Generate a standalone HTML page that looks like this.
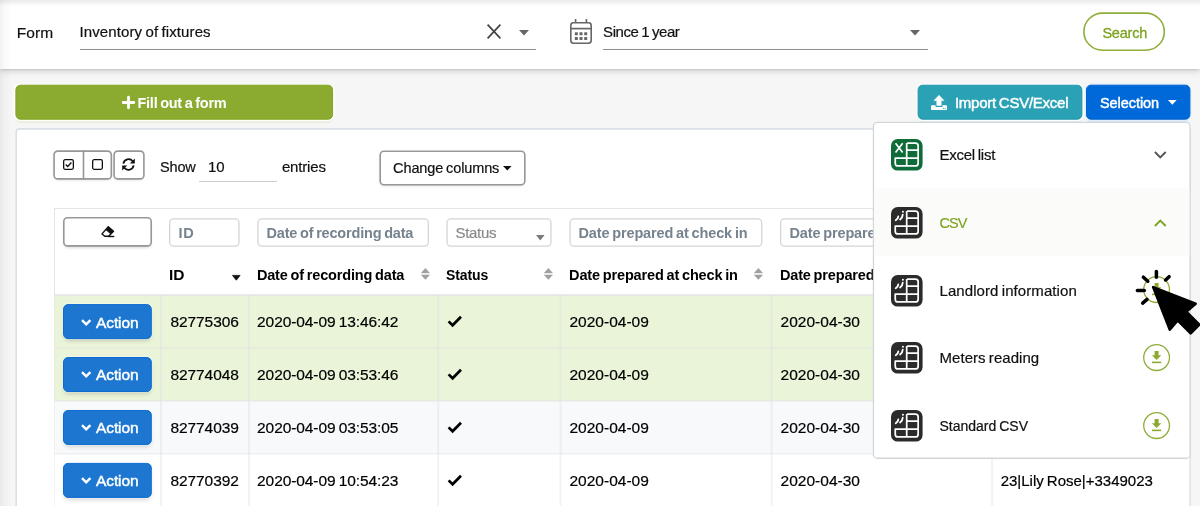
<!DOCTYPE html>
<html lang="en">
<head>
<meta charset="utf-8">
<title>Inventory of fixtures</title>
<style>
*{box-sizing:border-box;margin:0;padding:0}
html,body{width:1200px;height:506px;overflow:hidden;background:#f6f6f6}
body{font-family:"Liberation Sans",sans-serif;font-size:15px;color:#111;position:relative}
.t{position:absolute;white-space:nowrap;line-height:20px}
#wrap{position:absolute;left:0;top:0;width:1200px;height:506px;overflow:hidden;will-change:transform}
#topbar{position:absolute;left:0;top:0;width:1200px;height:68.5px;background:#fff;box-shadow:0 1px 2px rgba(0,0,0,.12),0 3px 6px rgba(0,0,0,.12)}
#topgrad{position:absolute;left:0;top:0;width:1200px;height:6px;background:linear-gradient(#e9e9e9,rgba(255,255,255,0))}
#leftgrad{position:absolute;left:0;top:0;width:12px;height:506px;background:linear-gradient(90deg,rgba(0,0,0,.055),rgba(0,0,0,.02) 40%,rgba(0,0,0,0))}
.uline{position:absolute;height:1.4px;background:#909090}
#tbl{position:absolute;left:53.600px;top:207.600px;width:1135.600px;height:300px;border-top:1.3px solid #e6e6e6;border-left:1.3px solid #e6e6e6}
svg{position:absolute;overflow:visible}
</style>
</head>
<body>
<div id="wrap">
<div id="topbar"><div id="topgrad"></div></div>
<span class="t" style="left:16.7px;top:22.6px;font-size:15.5px;color:#111;letter-spacing:0.13px;word-spacing:-1.0px;-webkit-text-stroke:0.2px #111">Form</span>
<span class="t" style="left:79.5px;top:22.2px;font-size:15px;color:#111;letter-spacing:0.11px;word-spacing:-1.0px;-webkit-text-stroke:0.2px #111">Inventory of fixtures</span>
<div class="uline" style="left:80px;top:48.500px;width:456px"></div>
<svg style="left:487.2px;top:24.4px" width="14" height="15" viewBox="0 0 14 15"><path d="M0.6 0.6L13.4 14.4M13.4 0.6L0.6 14.4" stroke="#444" stroke-width="1.7" fill="none"/></svg>
<svg style="left:518.6px;top:29.8px" width="10" height="5.5" viewBox="0 0 10 5.5"><path d="M0 0H10L5.0 5.5Z" fill="#666"/></svg>
<svg style="left:570px;top:19px" width="22" height="25" viewBox="0 0 22 25"><rect x="0.8" y="3.8" width="20.4" height="20.4" rx="2.6" fill="none" stroke="#666" stroke-width="1.6"/>
<path d="M1 9.6H21" stroke="#666" stroke-width="1.7"/><path d="M5.600 0V4M16.400 0V4" stroke="#666" stroke-width="1.600"/>
<g fill="#666"><rect x="4.800" y="13.300" width="3" height="3" rx=".5"/><rect x="9.500" y="13.300" width="3" height="3" rx=".5"/><rect x="14.200" y="13.300" width="3" height="3" rx=".5"/><rect x="4.800" y="17.900" width="3" height="3" rx=".5"/><rect x="9.500" y="17.900" width="3" height="3" rx=".5"/><rect x="14.200" y="17.900" width="3" height="3" rx=".5"/></g></svg>
<span class="t" style="left:603.1px;top:22.2px;font-size:15px;color:#111;letter-spacing:-0.42px;word-spacing:-1.0px;-webkit-text-stroke:0.2px #111">Since 1 year</span>
<div class="uline" style="left:603px;top:48.500px;width:325px"></div>
<svg style="left:910.4px;top:29.8px" width="10" height="5.5" viewBox="0 0 10 5.5"><path d="M0 0H10L5.0 5.5Z" fill="#666"/></svg>
<svg style="left:1080px;top:9px" width="89" height="45" viewBox="1080 9 89 45"><rect x="1083.9" y="13.1" width="80.4" height="37.1" rx="18.599999999999998" fill="#fff" stroke="#8fae3a" stroke-width="1.6"/></svg>
<span class="t" style="left:1102.4px;top:23.2px;font-size:14.5px;color:#7da220;letter-spacing:-0.2px;word-spacing:-1.0px;-webkit-text-stroke:0.3px #7da220">Search</span>

<div style="position:absolute;left:16px;top:86px;width:316px;height:33px;border-radius:5px;box-shadow:0 0 0 2.500px rgba(255,255,255,.95),0 3px 2px rgba(138,171,48,.35)"></div><svg style="left:12px;top:81px" width="325" height="42" viewBox="12 81 325 42"><rect x="15.9" y="85.2" width="316.7" height="34.0" rx="4.5" fill="#8aab30" stroke="#81a520" stroke-width="1"/></svg>
<svg style="left:121.6px;top:96px" width="13" height="13" viewBox="0 0 13 13"><path d="M6.500 1.200V11.800M1.200 6.500H11.800" stroke="#fff" stroke-width="2.800" stroke-linecap="round"/></svg>
<span class="t" style="left:137.5px;top:93.0px;font-size:14.5px;color:#fff;letter-spacing:-0.26px;word-spacing:-1.0px;font-weight:bold">Fill out a form</span>
<div style="position:absolute;left:919px;top:86px;width:163px;height:33px;border-radius:5px;box-shadow:0 0 0 2.500px rgba(255,255,255,.95),0 3px 2px rgba(42,161,181,.3)"></div><svg style="left:914px;top:81px" width="172" height="42" viewBox="914 81 172 42"><rect x="918.1" y="85.2" width="163.8" height="34.0" rx="4.5" fill="#2aa1b5" stroke="#2297ab" stroke-width="1"/></svg>
<svg style="left:930.6px;top:95px" width="16" height="15" viewBox="0 0 16 15"><path d="M8 0.300L13 5.600H10.200V10.400H5.800V5.600H3Z" fill="#fff" stroke="#fff" stroke-width=".6" stroke-linejoin="round"/><path d="M0.800 10.300H4.600V12H11.400V10.300H15.200Q16 10.300 16 11.100V14.200Q16 15 15.200 15H0.800Q0 15 0 14.200V11.100Q0 10.300 0.800 10.300Z" fill="#fff"/><circle cx="12.300" cy="13.300" r=".6" fill="#2aa1b5"/><circle cx="14.100" cy="13.300" r=".6" fill="#2aa1b5"/></svg>
<span class="t" style="left:954.9px;top:93.0px;font-size:15px;color:#fff;letter-spacing:-0.25px;word-spacing:-1.0px;-webkit-text-stroke:0.45px #fff">Import CSV/Excel</span>
<div style="position:absolute;left:1087px;top:86px;width:102px;height:33px;border-radius:5px;box-shadow:0 0 0 2.500px rgba(225,238,252,.95),0 3px 2px rgba(0,105,217,.25)"></div><svg style="left:1083px;top:81px" width="111" height="42" viewBox="1083 81 111 42"><rect x="1086.5" y="85.2" width="103.4" height="34.0" rx="4.5" fill="#0069d9" stroke="#0062cc" stroke-width="1"/></svg>
<span class="t" style="left:1099.9px;top:93.0px;font-size:14.5px;color:#fff;letter-spacing:-0.05px;word-spacing:-1.0px;-webkit-text-stroke:0.45px #fff">Selection</span>
<svg style="left:1168.4px;top:99.6px" width="8.6" height="4.8" viewBox="0 0 8.6 4.8"><path d="M0 0H8.6L4.3 4.8Z" fill="#fff"/></svg>

<svg style="left:12px;top:125px" width="1182" height="398" viewBox="12 125 1182 398"><rect x="16.2" y="128.9" width="1173.8" height="390.3" rx="3.2" fill="#fff" stroke="#dae0e5" stroke-width="1.6"/></svg>
<div style="position:absolute;left:54px;top:151px;width:57px;height:27px;border-radius:4.5px;box-shadow:0 2px 3px rgba(0,0,0,.15)"></div><svg style="left:50px;top:147px" width="66" height="36" viewBox="50 147 66 36"><rect x="54.1" y="151.1" width="57.2" height="27.8" rx="3.7" fill="#fff" stroke="#979797" stroke-width="1.6"/><path d="M83.500 150.300V179.700" stroke="#979797" stroke-width="1.600"/></svg>
<div style="position:absolute;left:114px;top:151px;width:29px;height:27px;border-radius:4.5px;box-shadow:0 2px 3px rgba(0,0,0,.15)"></div><svg style="left:110px;top:147px" width="38" height="36" viewBox="110 147 38 36"><rect x="114.1" y="151.1" width="29.8" height="27.8" rx="3.7" fill="#fff" stroke="#979797" stroke-width="1.6"/></svg>
<svg style="left:63px;top:159px" width="11" height="11" viewBox="0 0 11 11"><rect x="0.650" y="0.650" width="9.700" height="9.700" rx="1.500" fill="none" stroke="#111" stroke-width="1.300"/><path d="M2.700 5.500L4.700 7.500L8.400 3.500" fill="none" stroke="#111" stroke-width="1.400"/></svg><svg style="left:92px;top:159px" width="11" height="11" viewBox="0 0 11 11"><rect x="0.650" y="0.650" width="9.700" height="9.700" rx="1.500" fill="none" stroke="#111" stroke-width="1.300"/></svg><svg style="left:122px;top:158px" width="13" height="13" viewBox="0 0 13 13"><path d="M1.400 5.700A5.200 5.200 0 0 1 10.700 3.300" fill="none" stroke="#111" stroke-width="1.800"/><path d="M12.800 0.400V5.400H7.800Z" fill="#111"/><path d="M11.600 7.300A5.200 5.200 0 0 1 2.300 9.700" fill="none" stroke="#111" stroke-width="1.800"/><path d="M0.200 12.600V7.600H5.200Z" fill="#111"/></svg>
<span class="t" style="left:160.1px;top:157.2px;font-size:14.5px;color:#111;letter-spacing:-0.2px;word-spacing:-1.0px;-webkit-text-stroke:0.2px #111">Show</span>
<span class="t" style="left:207.9px;top:157.4px;font-size:15px;color:#111;letter-spacing:0.0px;word-spacing:-1.0px;-webkit-text-stroke:0.2px #111">10</span>
<div class="uline" style="left:199.400px;top:180.800px;width:77.600px;background:#cfcfcf;height:1.200px"></div>
<span class="t" style="left:281.9px;top:157.2px;font-size:15px;color:#111;letter-spacing:-0.17px;word-spacing:-1.0px;-webkit-text-stroke:0.2px #111">entries</span>
<div style="position:absolute;left:380px;top:151px;width:144px;height:33px;border-radius:4.5px;box-shadow:0 2px 3px rgba(0,0,0,.15)"></div><svg style="left:376px;top:147px" width="153" height="42" viewBox="376 147 153 42"><rect x="380.2" y="151.2" width="144.6" height="33.6" rx="3.7" fill="#fff" stroke="#979797" stroke-width="1.6"/></svg>
<span class="t" style="left:393.1px;top:158.0px;font-size:14.5px;color:#111;letter-spacing:-0.12px;word-spacing:-1.0px;-webkit-text-stroke:0.2px #111">Change columns</span>
<svg style="left:503px;top:165.6px" width="8.6" height="4.6" viewBox="0 0 8.6 4.6"><path d="M0 0H8.6L4.3 4.6Z" fill="#111"/></svg>

<div id="tbl"></div>
<div style="position:absolute;left:64px;top:218px;width:87px;height:28px;border-radius:4.5px;box-shadow:0 2px 3px rgba(0,0,0,.15)"></div><svg style="left:60px;top:214px" width="95" height="36" viewBox="60 214 95 36"><rect x="63.8" y="217.8" width="87.4" height="28.1" rx="3.7" fill="#fff" stroke="#979797" stroke-width="1.6"/></svg>
<svg style="left:101px;top:226px" width="13.5" height="11.5" viewBox="0 0 13.5 11.5"><path d="M7.300 0.800L12.500 5.300L7.700 10.300H3.700L1 7.900Z" fill="#fff" stroke="#111" stroke-width="1.400" stroke-linejoin="round"/><path d="M7.300 0.800L12.500 5.300L9.800 8.100L4.600 3.600Z" fill="#111" stroke="#111" stroke-width=".6" stroke-linejoin="round"/><path d="M7 10.500H13.300" stroke="#111" stroke-width="1.400"/></svg>
<svg style="left:166px;top:215px" width="77" height="35" viewBox="166 215 77 35"><rect x="169.65" y="218.95" width="69.3" height="27.1" rx="3.85" fill="#fff" stroke="#d4d5d6" stroke-width="1.3"/></svg><span class="t" style="left:178.5px;top:223.0px;font-size:14.5px;color:#76838f;letter-spacing:0.6px;word-spacing:-1.0px;font-weight:bold">ID</span>
<svg style="left:254px;top:215px" width="178" height="35" viewBox="254 215 178 35"><rect x="257.95" y="218.95" width="170.4" height="27.1" rx="3.85" fill="#fff" stroke="#d4d5d6" stroke-width="1.3"/></svg><span class="t" style="left:266.5px;top:223.0px;font-size:14.5px;color:#76838f;letter-spacing:-0.19px;word-spacing:-1.0px;font-weight:bold">Date of recording data</span>
<svg style="left:443px;top:215px" width="112" height="35" viewBox="443 215 112 35"><rect x="447.05" y="218.95" width="103.9" height="27.1" rx="3.85" fill="#fff" stroke="#d4d5d6" stroke-width="1.3"/></svg><span class="t" style="left:455.5px;top:223.0px;font-size:15px;color:#8a8a8a;letter-spacing:-0.32px;word-spacing:-1.0px;-webkit-text-stroke:0.2px #8a8a8a">Status</span>
<svg style="left:536px;top:235px" width="8.6" height="5.4" viewBox="0 0 8.6 5.4"><path d="M0 0H8.6L4.3 5.4Z" fill="#7a7a7a"/></svg>
<svg style="left:566px;top:215px" width="200" height="35" viewBox="566 215 200 35"><rect x="570.05" y="218.95" width="191.7" height="27.1" rx="3.85" fill="#fff" stroke="#d4d5d6" stroke-width="1.3"/></svg><span class="t" style="left:578.5px;top:223.0px;font-size:14.5px;color:#76838f;letter-spacing:-0.14px;word-spacing:-1.0px;font-weight:bold">Date prepared at check in</span>
<svg style="left:777px;top:215px" width="209" height="35" viewBox="777 215 209 35"><rect x="780.65" y="218.95" width="201.7" height="27.1" rx="3.85" fill="#fff" stroke="#d4d5d6" stroke-width="1.3"/></svg><span class="t" style="left:789.5px;top:223.0px;font-size:14.5px;color:#76838f;letter-spacing:-0.14px;word-spacing:-1.0px;font-weight:bold">Date prepared at check out</span>

<span class="t" style="left:168.9px;top:265.4px;font-size:15.5px;color:#000;letter-spacing:0.0px;word-spacing:-1.0px;font-weight:bold">ID</span><svg style="left:232px;top:275px" width="8.6" height="5.6" viewBox="0 0 8.6 5.6"><path d="M0.500 0.400H8.100L4.300 5.200Z" fill="#111" stroke="#111" stroke-width=".8" stroke-linejoin="round"/></svg>
<span class="t" style="left:256.9px;top:265.4px;font-size:14.5px;color:#000;letter-spacing:-0.16px;word-spacing:-1.0px;font-weight:bold">Date of recording data</span><svg style="left:421.20000000000005px;top:268.1px" width="8.8" height="11.8" viewBox="0 0 8.8 11.8"><path d="M4.400 0.300L8.500 4.900H0.300Z M0.300 6.900H8.500L4.400 11.500Z" fill="#a0a0a0" stroke="#a0a0a0" stroke-width=".5" stroke-linejoin="round"/></svg>
<span class="t" style="left:446.1px;top:265.4px;font-size:14.0px;color:#000;letter-spacing:-0.12px;word-spacing:-1.0px;font-weight:bold">Status</span><svg style="left:543.8000000000001px;top:268.1px" width="8.8" height="11.8" viewBox="0 0 8.8 11.8"><path d="M4.400 0.300L8.500 4.900H0.300Z M0.300 6.900H8.500L4.400 11.500Z" fill="#a0a0a0" stroke="#a0a0a0" stroke-width=".5" stroke-linejoin="round"/></svg>
<span class="t" style="left:569.1px;top:265.4px;font-size:14.5px;color:#000;letter-spacing:-0.15px;word-spacing:-1.0px;font-weight:bold">Date prepared at check in</span><svg style="left:754.2px;top:268.1px" width="8.8" height="11.8" viewBox="0 0 8.8 11.8"><path d="M4.400 0.300L8.500 4.900H0.300Z M0.300 6.900H8.500L4.400 11.500Z" fill="#a0a0a0" stroke="#a0a0a0" stroke-width=".5" stroke-linejoin="round"/></svg>
<span class="t" style="left:779.9px;top:265.4px;font-size:14.5px;color:#000;letter-spacing:-0.15px;word-spacing:-1.0px;font-weight:bold">Date prepared at check out</span><svg style="left:969.6px;top:268.1px" width="8.8" height="11.8" viewBox="0 0 8.8 11.8"><path d="M4.400 0.300L8.500 4.900H0.300Z M0.300 6.900H8.500L4.400 11.500Z" fill="#a0a0a0" stroke="#a0a0a0" stroke-width=".5" stroke-linejoin="round"/></svg>

<svg style="left:50px;top:290px" width="1150" height="216" viewBox="50 290 1150 216"><rect x="54.500" y="295.05" width="1134.800" height="53.40" fill="#eaf4d8"/><rect x="54.500" y="347.95" width="1134.800" height="53.40" fill="#eaf4d8"/><rect x="54.500" y="400.85" width="1134.800" height="53.40" fill="#f8f9fb"/><rect x="54.500" y="453.75" width="1134.800" height="53.40" fill="#ffffff"/><path d="M54.500 295.05H1189.300" stroke="#dde1e5" stroke-opacity=".85" stroke-width="1.600"/><path d="M54.500 347.95H1189.300" stroke="#dde1e5" stroke-opacity=".45" stroke-width="1.600"/><path d="M54.500 400.85H1189.300" stroke="#dde1e5" stroke-opacity=".45" stroke-width="1.600"/><path d="M54.500 453.75H1189.300" stroke="#dde1e5" stroke-opacity=".45" stroke-width="1.600"/><path d="M161.0 294.35V506" stroke="#dde1e5" stroke-opacity=".42" stroke-width="2"/><path d="M249.0 294.35V506" stroke="#dde1e5" stroke-opacity=".42" stroke-width="2"/><path d="M438.2 294.35V506" stroke="#dde1e5" stroke-opacity=".42" stroke-width="2"/><path d="M560.6 294.35V506" stroke="#dde1e5" stroke-opacity=".42" stroke-width="2"/><path d="M771.7 294.35V506" stroke="#dde1e5" stroke-opacity=".42" stroke-width="2"/><path d="M992.2 294.35V506" stroke="#dde1e5" stroke-opacity=".42" stroke-width="2"/></svg>
<div style="position:absolute;left:64px;top:305px;width:87px;height:33px;border-radius:5px;box-shadow:0 0 0 2px rgba(255,255,255,.3),0 3px 4px rgba(0,0,0,.16)"></div><svg style="left:60px;top:301px" width="95" height="42" viewBox="60 301 95 42"><rect x="63.5" y="304.6" width="87.8" height="34.0" rx="4.5" fill="#1d77d1" stroke="#0c6bd2" stroke-width="1"/></svg><svg style="left:80.8px;top:318.5px" width="10.4" height="7.2" viewBox="0 0 10.4 7.2"><path d="M1 1.100L5.200 5.300L9.400 1.100" fill="none" stroke="#fff" stroke-width="2.400"/></svg><span class="t" style="left:96.0px;top:312.5px;font-size:15.5px;color:#fff;letter-spacing:-0.1px;word-spacing:-1.0px;-webkit-text-stroke:0.45px #fff">Action</span>
<span class="t" style="left:170.5px;top:312.1px;font-size:15.5px;color:#000;letter-spacing:-0.09px;word-spacing:-1.0px;-webkit-text-stroke:0.2px #000">82775306</span><span class="t" style="left:257.1px;top:312.1px;font-size:15.5px;color:#000;letter-spacing:-0.09px;word-spacing:-1.0px;-webkit-text-stroke:0.2px #000">2020-04-09 13:46:42</span><svg style="left:446.6px;top:315.4px" width="15.9" height="12.2" viewBox="0 0 15.9 12.2"><path d="M1.600 6.400L5.600 10.300L14 1.700" fill="none" stroke="#000" stroke-width="2.700"/></svg><span class="t" style="left:569.5px;top:312.1px;font-size:15.5px;color:#000;letter-spacing:0.0px;word-spacing:-1.0px;-webkit-text-stroke:0.2px #000">2020-04-09</span><span class="t" style="left:780.5px;top:312.1px;font-size:15.5px;color:#000;letter-spacing:0.02px;word-spacing:-1.0px;-webkit-text-stroke:0.2px #000">2020-04-30</span>
<div style="position:absolute;left:64px;top:358px;width:87px;height:33px;border-radius:5px;box-shadow:0 0 0 2px rgba(255,255,255,.3),0 3px 4px rgba(0,0,0,.16)"></div><svg style="left:60px;top:354px" width="95" height="42" viewBox="60 354 95 42"><rect x="63.5" y="357.53" width="87.8" height="34.0" rx="4.5" fill="#1d77d1" stroke="#0c6bd2" stroke-width="1"/></svg><svg style="left:80.8px;top:371.42999999999995px" width="10.4" height="7.2" viewBox="0 0 10.4 7.2"><path d="M1 1.100L5.200 5.300L9.400 1.100" fill="none" stroke="#fff" stroke-width="2.400"/></svg><span class="t" style="left:96.0px;top:365.4px;font-size:15.5px;color:#fff;letter-spacing:-0.1px;word-spacing:-1.0px;-webkit-text-stroke:0.45px #fff">Action</span>
<span class="t" style="left:170.5px;top:365.1px;font-size:15.5px;color:#000;letter-spacing:-0.09px;word-spacing:-1.0px;-webkit-text-stroke:0.2px #000">82774048</span><span class="t" style="left:257.1px;top:365.1px;font-size:15.5px;color:#000;letter-spacing:-0.09px;word-spacing:-1.0px;-webkit-text-stroke:0.2px #000">2020-04-09 03:53:46</span><svg style="left:446.6px;top:368.33px" width="15.9" height="12.2" viewBox="0 0 15.9 12.2"><path d="M1.600 6.400L5.600 10.300L14 1.700" fill="none" stroke="#000" stroke-width="2.700"/></svg><span class="t" style="left:569.5px;top:365.1px;font-size:15.5px;color:#000;letter-spacing:0.0px;word-spacing:-1.0px;-webkit-text-stroke:0.2px #000">2020-04-09</span><span class="t" style="left:780.5px;top:365.1px;font-size:15.5px;color:#000;letter-spacing:0.02px;word-spacing:-1.0px;-webkit-text-stroke:0.2px #000">2020-04-30</span>
<div style="position:absolute;left:64px;top:411px;width:87px;height:33px;border-radius:5px;box-shadow:0 0 0 2px rgba(255,255,255,.3),0 3px 4px rgba(0,0,0,.16)"></div><svg style="left:60px;top:406px" width="95" height="42" viewBox="60 406 95 42"><rect x="63.5" y="410.46" width="87.8" height="34.0" rx="4.5" fill="#1d77d1" stroke="#0c6bd2" stroke-width="1"/></svg><svg style="left:80.8px;top:424.35999999999996px" width="10.4" height="7.2" viewBox="0 0 10.4 7.2"><path d="M1 1.100L5.200 5.300L9.400 1.100" fill="none" stroke="#fff" stroke-width="2.400"/></svg><span class="t" style="left:96.0px;top:418.4px;font-size:15.5px;color:#fff;letter-spacing:-0.1px;word-spacing:-1.0px;-webkit-text-stroke:0.45px #fff">Action</span>
<span class="t" style="left:170.5px;top:418.0px;font-size:15.5px;color:#000;letter-spacing:-0.09px;word-spacing:-1.0px;-webkit-text-stroke:0.2px #000">82774039</span><span class="t" style="left:257.1px;top:418.0px;font-size:15.5px;color:#000;letter-spacing:-0.09px;word-spacing:-1.0px;-webkit-text-stroke:0.2px #000">2020-04-09 03:53:05</span><svg style="left:446.6px;top:421.26px" width="15.9" height="12.2" viewBox="0 0 15.9 12.2"><path d="M1.600 6.400L5.600 10.300L14 1.700" fill="none" stroke="#000" stroke-width="2.700"/></svg><span class="t" style="left:569.5px;top:418.0px;font-size:15.5px;color:#000;letter-spacing:0.0px;word-spacing:-1.0px;-webkit-text-stroke:0.2px #000">2020-04-09</span><span class="t" style="left:780.5px;top:418.0px;font-size:15.5px;color:#000;letter-spacing:0.02px;word-spacing:-1.0px;-webkit-text-stroke:0.2px #000">2020-04-30</span>
<div style="position:absolute;left:64px;top:464px;width:87px;height:33px;border-radius:5px;box-shadow:0 0 0 2px rgba(255,255,255,.3),0 3px 4px rgba(0,0,0,.16)"></div><svg style="left:60px;top:459px" width="95" height="42" viewBox="60 459 95 42"><rect x="63.5" y="463.39" width="87.8" height="34.0" rx="4.5" fill="#1d77d1" stroke="#0c6bd2" stroke-width="1"/></svg><svg style="left:80.8px;top:477.28999999999996px" width="10.4" height="7.2" viewBox="0 0 10.4 7.2"><path d="M1 1.100L5.200 5.300L9.400 1.100" fill="none" stroke="#fff" stroke-width="2.400"/></svg><span class="t" style="left:96.0px;top:471.4px;font-size:15.5px;color:#fff;letter-spacing:-0.1px;word-spacing:-1.0px;-webkit-text-stroke:0.45px #fff">Action</span>
<span class="t" style="left:170.5px;top:471.0px;font-size:15.5px;color:#000;letter-spacing:-0.09px;word-spacing:-1.0px;-webkit-text-stroke:0.2px #000">82770392</span><span class="t" style="left:257.1px;top:471.0px;font-size:15.5px;color:#000;letter-spacing:-0.09px;word-spacing:-1.0px;-webkit-text-stroke:0.2px #000">2020-04-09 10:54:23</span><svg style="left:446.6px;top:474.19px" width="15.9" height="12.2" viewBox="0 0 15.9 12.2"><path d="M1.600 6.400L5.600 10.300L14 1.700" fill="none" stroke="#000" stroke-width="2.700"/></svg><span class="t" style="left:569.5px;top:471.0px;font-size:15.5px;color:#000;letter-spacing:0.0px;word-spacing:-1.0px;-webkit-text-stroke:0.2px #000">2020-04-09</span><span class="t" style="left:780.5px;top:471.0px;font-size:15.5px;color:#000;letter-spacing:0.02px;word-spacing:-1.0px;-webkit-text-stroke:0.2px #000">2020-04-30</span>
<span class="t" style="left:1000.7px;top:471.0px;font-size:15px;color:#000;letter-spacing:-0.01px;word-spacing:-1.0px;-webkit-text-stroke:0.2px #000">23|Lily Rose|+3349023</span>
<div style="position:absolute;left:874px;top:123px;width:316px;height:335px;border-radius:4.5px;box-shadow:0 1px 2px rgba(0,0,0,.05)"></div><svg style="left:869px;top:118px" width="325" height="344" viewBox="869 118 325 344"><rect x="873.45" y="122.35" width="316.6" height="335.9" rx="3.85" fill="#fff" stroke="#d3d6d9" stroke-width="1.3"/><rect x="874" y="188.500" width="315.400" height="67.600" fill="#fbfbf9"/></svg>
<svg style="left:891px;top:138.95px" width="31.6" height="31.6" viewBox="0 0 32 32"><rect width="32" height="32" rx="6.800" fill="#0f6b38"/><path d="M16.300 4.100H24.700Q27.500 4.100 27.500 6.900V24.500Q27.500 27.300 24.700 27.300H7Q4.300 27.300 4.300 24.500V19.300H27.500M15.900 4.100V27.300M15.900 11.300H27.500" fill="none" stroke="#fff" stroke-width="1.750" stroke-linejoin="round"/><path d="M4.600 4.400L11.800 13.600M11.800 4.400L4.600 13.600" stroke="#fff" stroke-width="1.700" fill="none"/></svg><span class="t" style="left:939.5px;top:144.9px;font-size:15px;color:#111;letter-spacing:-0.26px;word-spacing:-1.0px;-webkit-text-stroke:0.2px #111">Excel list</span><svg style="left:1153.6px;top:151.2px" width="12.6" height="8" viewBox="0 0 12.6 8"><path d="M0.900 1L6.300 6.400L11.700 1" fill="none" stroke="#555" stroke-width="1.900"/></svg>
<svg style="left:891px;top:206.75px" width="31.6" height="31.6" viewBox="0 0 32 32"><rect width="32" height="32" rx="6.800" fill="#2b2b2b"/><path d="M16.300 4.100H24.700Q27.500 4.100 27.500 6.900V24.500Q27.500 27.300 24.700 27.300H7Q4.300 27.300 4.300 24.500V19.300H27.500M15.900 4.100V27.300M15.900 11.300H27.500" fill="none" stroke="#fff" stroke-width="1.750" stroke-linejoin="round"/><path d="M7.400 9.500Q7.200 11.900 4.800 13.500M11.900 7.700Q11.700 10.900 9.200 12.700" stroke="#fff" stroke-width="1.850" fill="none" stroke-linecap="round"/><circle cx="12.100" cy="4.900" r="1" fill="#fff"/></svg><span class="t" style="left:939.5px;top:212.5px;font-size:14.5px;color:#7da220;letter-spacing:-0.9px;word-spacing:-1.0px;-webkit-text-stroke:0.15px #7da220">CSV</span><svg style="left:1153.6px;top:219px" width="12.6" height="8" viewBox="0 0 12.6 8"><path d="M0.900 7L6.300 1.600L11.700 7" fill="none" stroke="#7da220" stroke-width="1.900"/></svg>
<svg style="left:891px;top:274.55px" width="31.6" height="31.6" viewBox="0 0 32 32"><rect width="32" height="32" rx="6.800" fill="#2b2b2b"/><path d="M16.300 4.100H24.700Q27.500 4.100 27.500 6.900V24.500Q27.500 27.300 24.700 27.300H7Q4.300 27.300 4.300 24.500V19.300H27.500M15.900 4.100V27.300M15.900 11.300H27.500" fill="none" stroke="#fff" stroke-width="1.750" stroke-linejoin="round"/><path d="M7.400 9.500Q7.200 11.900 4.800 13.500M11.900 7.700Q11.700 10.900 9.200 12.700" stroke="#fff" stroke-width="1.850" fill="none" stroke-linecap="round"/><circle cx="12.100" cy="4.900" r="1" fill="#fff"/></svg><span class="t" style="left:939.5px;top:280.6px;font-size:15px;color:#111;letter-spacing:0.08px;word-spacing:-1.0px;-webkit-text-stroke:0.2px #111">Landlord information</span><svg style="left:1143px;top:276.45000000000005px" width="27.2" height="27.2" viewBox="0 0 27.2 27.2"><circle cx="13.600" cy="13.600" r="12.900" fill="#fff" stroke="#8fae3a" stroke-width="1.300"/><path d="M11.600 7.100H15.600V11.200H18.300L13.600 15.900L8.900 11.200H11.600Z" fill="#8aab30"/><path d="M9 17.600H18.200V19.200H9Z" fill="#8aab30"/></svg>
<svg style="left:891px;top:342.34999999999997px" width="31.6" height="31.6" viewBox="0 0 32 32"><rect width="32" height="32" rx="6.800" fill="#2b2b2b"/><path d="M16.300 4.100H24.700Q27.500 4.100 27.500 6.900V24.500Q27.500 27.300 24.700 27.300H7Q4.300 27.300 4.300 24.500V19.300H27.500M15.900 4.100V27.300M15.900 11.300H27.500" fill="none" stroke="#fff" stroke-width="1.750" stroke-linejoin="round"/><path d="M7.400 9.500Q7.200 11.900 4.800 13.500M11.900 7.700Q11.700 10.900 9.200 12.700" stroke="#fff" stroke-width="1.850" fill="none" stroke-linecap="round"/><circle cx="12.100" cy="4.900" r="1" fill="#fff"/></svg><span class="t" style="left:939.5px;top:348.4px;font-size:15px;color:#111;letter-spacing:0.05px;word-spacing:-1.0px;-webkit-text-stroke:0.2px #111">Meters reading</span><svg style="left:1143px;top:344.25px" width="27.2" height="27.2" viewBox="0 0 27.2 27.2"><circle cx="13.600" cy="13.600" r="12.900" fill="#fff" stroke="#8fae3a" stroke-width="1.300"/><path d="M11.600 7.100H15.600V11.200H18.300L13.600 15.900L8.900 11.200H11.600Z" fill="#8aab30"/><path d="M9 17.600H18.200V19.200H9Z" fill="#8aab30"/></svg>
<svg style="left:891px;top:410.15px" width="31.6" height="31.6" viewBox="0 0 32 32"><rect width="32" height="32" rx="6.800" fill="#2b2b2b"/><path d="M16.300 4.100H24.700Q27.500 4.100 27.500 6.900V24.500Q27.500 27.300 24.700 27.300H7Q4.300 27.300 4.300 24.500V19.300H27.500M15.900 4.100V27.300M15.900 11.300H27.500" fill="none" stroke="#fff" stroke-width="1.750" stroke-linejoin="round"/><path d="M7.400 9.500Q7.200 11.900 4.800 13.500M11.900 7.700Q11.700 10.900 9.200 12.700" stroke="#fff" stroke-width="1.850" fill="none" stroke-linecap="round"/><circle cx="12.100" cy="4.900" r="1" fill="#fff"/></svg><span class="t" style="left:939.5px;top:416.2px;font-size:14px;color:#111;letter-spacing:0.0px;word-spacing:-1.0px;-webkit-text-stroke:0.2px #111">Standard CSV</span><svg style="left:1143px;top:412.05px" width="27.2" height="27.2" viewBox="0 0 27.2 27.2"><circle cx="13.600" cy="13.600" r="12.900" fill="#fff" stroke="#8fae3a" stroke-width="1.300"/><path d="M11.600 7.100H15.600V11.200H18.300L13.600 15.900L8.900 11.200H11.600Z" fill="#8aab30"/><path d="M9 17.600H18.200V19.200H9Z" fill="#8aab30"/></svg>
<svg id="cursor" style="left:1130px;top:265px" width="70" height="75" viewBox="0 0 70 75"><g stroke="#000" stroke-width="3.500" stroke-linecap="round" fill="none"><path d="M26.400 6.600V12.300"/><path d="M13.400 12.200L17.800 16.200"/><path d="M7.400 25.400H14.300"/><path d="M12.700 38.100L17 34.400"/><path d="M35.600 15L39.100 11.700"/></g>
<g transform="translate(22,21) rotate(45)"><path d="M1.600 0L43.400 18.300L42.400 6.100H60.800V-6.100H42.400L43.400 -18.300Z" fill="#000" stroke="#000" stroke-width="2.600" stroke-linejoin="round"/></g></svg>
<div id="leftgrad"></div>
</div>
</body>
</html>
